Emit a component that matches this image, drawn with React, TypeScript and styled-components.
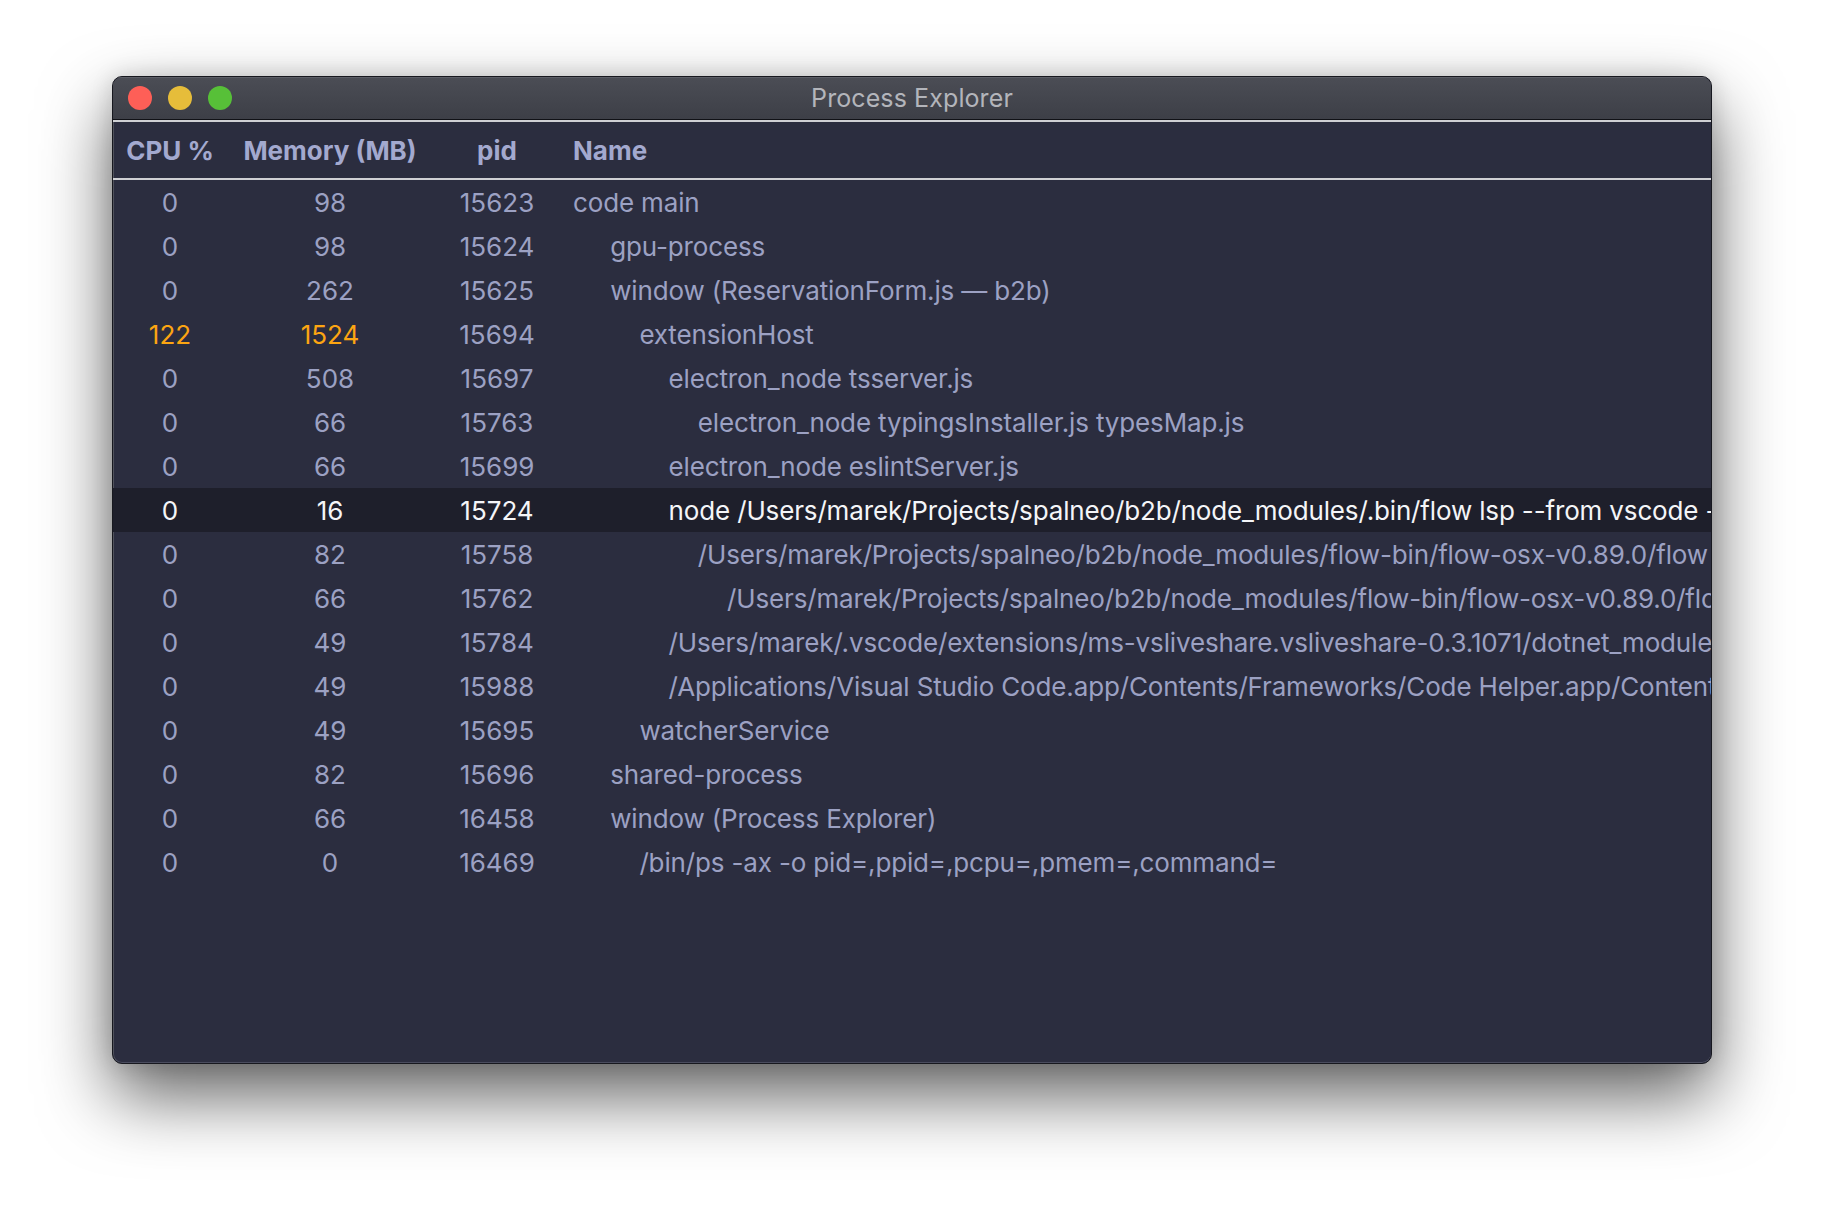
import { Component, ReactNode } from "react";
import styled, { createGlobalStyle } from "styled-components";

const GlobalStyle = createGlobalStyle`
  html, body {
    margin: 0;
    padding: 0;
    background: #ffffff;
  }
  body {
    font-family: Inter, "Noto Sans", "Liberation Sans", sans-serif;
  }
`;

const colors = {
  page: "#ffffff",
  panel: "#2b2d3f",
  selected: "#1e1f2b",
  text: "#9ca1c3",
  header: "#a3a9cf",
  hot: "#fca512",
  white: "#f4f5f8",
  rule: "#cfd0d4",
};

const Page = styled.div`
  width: 1824px;
  height: 1212px;
  box-sizing: border-box;
  padding: 76px 112px 148px 112px;
  background: ${colors.page};
`;

const Window = styled.div`
  width: 1600px;
  height: 988px;
  box-sizing: border-box;
  display: flex;
  flex-direction: column;
  border-radius: 10px;
  overflow: hidden;
  background: ${colors.panel};
  border: 1px solid #17181f;
  box-shadow: 0 32px 70px rgba(0, 0, 0, 0.62), 0 0 22px rgba(0, 0, 0, 0.14),
    inset 0 -1px 0 #4a4c5e, inset 1px 0 0 #50525c;
`;

const TitleBar = styled.div`
  height: 42px;
  flex-shrink: 0;
  display: grid;
  grid-template-columns: 1fr auto 1fr;
  align-items: center;
  background: linear-gradient(#4b4d55, #3d3f47);
  border-bottom: 1px solid #101116;
  box-shadow: inset 0 1px 0 #5c5e66;
`;

const Lights = styled.div`
  display: flex;
  gap: 16px;
  padding-left: 15px;
`;

const Light = styled.span<{ $color: string }>`
  width: 24px;
  height: 24px;
  border-radius: 50%;
  background: ${(p) => p.$color};
`;

const Title = styled.div`
  font-size: 25px;
  color: #b3b5bb;
  letter-spacing: 0.1px;
`;

const Grid = styled.div<{ $bg?: string }>`
  display: grid;
  grid-template-columns: 114px 206px 128px 1fr;
  align-items: center;
  background: ${(p) => p.$bg || "transparent"};
`;

const HeaderRow = styled(Grid)`
  height: 56px;
  border-top: 2px solid ${colors.rule};
  border-bottom: 2px solid ${colors.rule};
`;

const HeadCell = styled.div<{ $left?: boolean }>`
  font-size: 26px;
  font-weight: 650;
  color: ${colors.header};
  text-align: ${(p) => (p.$left ? "left" : "center")};
  padding-left: ${(p) => (p.$left ? "12px" : "0")};
  white-space: nowrap;
`;

const Row = styled(Grid)`
  height: 44px;
`;

const Cell = styled.div<{ $color: string }>`
  font-size: 26px;
  color: ${(p) => p.$color};
  text-align: center;
  white-space: nowrap;
`;

const NameCell = styled.div<{ $depth: number; $color: string }>`
  font-size: 26px;
  letter-spacing: -0.15px;
  color: ${(p) => p.$color};
  white-space: nowrap;
  overflow: hidden;
  padding-left: ${(p) => (p.$depth === 0 ? 12 : 20 + p.$depth * 29.2)}px;
`;

interface Proc {
  cpu: number;
  mem: number;
  pid: number;
  name: string;
  depth: number;
  selected?: boolean;
}

const procs: Proc[] = [
  { cpu: 0, mem: 98, pid: 15623, depth: 0, name: "code main" },
  { cpu: 0, mem: 98, pid: 15624, depth: 1, name: "gpu-process" },
  { cpu: 0, mem: 262, pid: 15625, depth: 1, name: "window (ReservationForm.js — b2b)" },
  { cpu: 122, mem: 1524, pid: 15694, depth: 2, name: "extensionHost" },
  { cpu: 0, mem: 508, pid: 15697, depth: 3, name: "electron_node tsserver.js" },
  { cpu: 0, mem: 66, pid: 15763, depth: 4, name: "electron_node typingsInstaller.js typesMap.js" },
  { cpu: 0, mem: 66, pid: 15699, depth: 3, name: "electron_node eslintServer.js" },
  {
    cpu: 0,
    mem: 16,
    pid: 15724,
    depth: 3,
    selected: true,
    name: "node /Users/marek/Projects/spalneo/b2b/node_modules/.bin/flow lsp --from vscode --lazy-mode ide",
  },
  {
    cpu: 0,
    mem: 82,
    pid: 15758,
    depth: 4,
    name: "/Users/marek/Projects/spalneo/b2b/node_modules/flow-bin/flow-osx-v0.89.0/flow server",
  },
  {
    cpu: 0,
    mem: 66,
    pid: 15762,
    depth: 5,
    name: "/Users/marek/Projects/spalneo/b2b/node_modules/flow-bin/flow-osx-v0.89.0/flow",
  },
  {
    cpu: 0,
    mem: 49,
    pid: 15784,
    depth: 3,
    name: "/Users/marek/.vscode/extensions/ms-vsliveshare.vsliveshare-0.3.1071/dotnet_modules/vsls-agent",
  },
  {
    cpu: 0,
    mem: 49,
    pid: 15988,
    depth: 3,
    name: "/Applications/Visual Studio Code.app/Contents/Frameworks/Code Helper.app/Contents/MacOS/Code Helper",
  },
  { cpu: 0, mem: 49, pid: 15695, depth: 2, name: "watcherService" },
  { cpu: 0, mem: 82, pid: 15696, depth: 1, name: "shared-process" },
  { cpu: 0, mem: 66, pid: 16458, depth: 1, name: "window (Process Explorer)" },
  { cpu: 0, mem: 0, pid: 16469, depth: 2, name: "/bin/ps -ax -o pid=,ppid=,pcpu=,pmem=,command=" },
];

class ProcessRow extends Component<{ proc: Proc }> {
  render(): ReactNode {
    const { proc } = this.props;
    const base = proc.selected ? colors.white : colors.text;
    const hot = proc.cpu > 50 ? colors.hot : base;
    return (
      <Row $bg={proc.selected ? colors.selected : undefined}>
        <Cell $color={hot}>{proc.cpu}</Cell>
        <Cell $color={hot}>{proc.mem}</Cell>
        <Cell $color={base}>{proc.pid}</Cell>
        <NameCell $depth={proc.depth} $color={base}>
          {proc.name}
        </NameCell>
      </Row>
    );
  }
}

export default class App extends Component {
  render(): ReactNode {
    return (
      <Page>
        <GlobalStyle />
        <Window>
          <TitleBar>
            <Lights>
              <Light $color="#fe5f57" />
              <Light $color="#e6bd3a" />
              <Light $color="#57c038" />
            </Lights>
            <Title>Process Explorer</Title>
            <div />
          </TitleBar>
          <HeaderRow>
            <HeadCell>CPU %</HeadCell>
            <HeadCell>Memory (MB)</HeadCell>
            <HeadCell>pid</HeadCell>
            <HeadCell $left>Name</HeadCell>
          </HeaderRow>
          {procs.map((p) => (
            <ProcessRow key={p.pid} proc={p} />
          ))}
        </Window>
      </Page>
    );
  }
}
